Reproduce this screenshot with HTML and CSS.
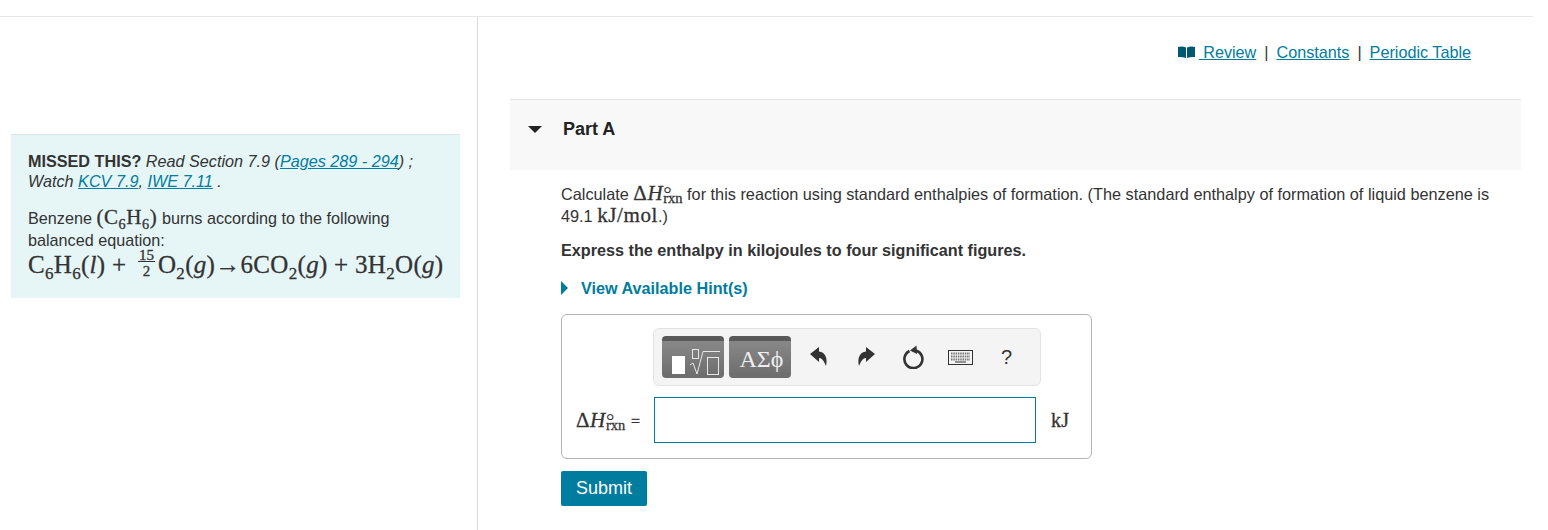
FILE: index.html
```html
<!DOCTYPE html>
<html lang="en">
<head>
  <meta charset="UTF-8">
  <title>Part A</title>
  <link rel="stylesheet" href="styles.css">
</head>
<body>
  <div class="page">
    <div class="left-section">
      <div class="intro">
        <p class="missed"><b>MISSED THIS?</b> <i>Read Section 7.9 (<a href="#">Pages 289 - 294</a>) ;<br>Watch <a href="#">KCV 7.9</a>, <a href="#">IWE 7.11</a> .</i></p>
        <p class="benzene">Benzene <span class="math paren">(C<sub>6</sub>H<sub>6</sub>)</span> burns according to the following<br>balanced equation:</p>
        <p class="equation math">C<sub>6</sub>H<sub>6</sub>(<i>l</i>) + <span class="frac"><span class="num">15</span><span class="den">2</span></span>O<sub>2</sub>(<i>g</i>)→6CO<sub>2</sub>(<i>g</i>) + 3H<sub>2</sub>O(<i>g</i>)</p>
      </div>
    </div>

    <div class="right-section">
      <div class="top-links">
        <svg class="book" width="17" height="12" viewBox="0 0 17 12"><path d="M0 1 Q4 0 8 1.500 V12 Q4 10.500 0 11 Z M9 1.500 Q13 0 17 1 V11 Q13 10.500 9 12 Z" fill="#00596f"/></svg>
        <a href="#">&nbsp;Review</a><span class="sep">|</span><a href="#">Constants</a><span class="sep">|</span><a href="#">Periodic Table</a>
      </div>

      <div class="part-head">
        <span class="arrow-down"></span>
        <h2>Part A</h2>
      </div>

      <div class="part-body">
        <p class="question">Calculate <span class="math big">Δ<i>H</i><span class="deg">°</span><span class="rxn">rxn</span></span> for this reaction using standard enthalpies of formation. (The standard enthalpy of formation of liquid benzene is<br>49.1 <span class="math big">kJ/mol</span>.)</p>
        <p class="express">Express the enthalpy in kilojoules to four significant figures.</p>
        <div class="hint"><span class="arrow-right"></span><a href="#">View Available Hint(s)</a></div>

        <div class="answer-box">
          <div class="toolbar">
            <div class="tool-btn templates">
              <span class="white-box"></span>
              <svg width="30" height="30" viewBox="0 0 30 30" fill="none" stroke="#e8e8e8" stroke-width="1"><rect x="2.500" y="2.500" width="6" height="9"/><path d="M0 18 L3 16 L7 27 L13 4.500 H30"/><rect x="17.500" y="10.500" width="11" height="17"/></svg>
            </div>
            <div class="tool-btn greek">ΑΣϕ</div>
            <svg class="icon undo" width="20" height="20" viewBox="0 0 20 20"><path d="M2 7 L11 0 V4.500 C17 5 20 11 18 19 C16 14 14 11 11 11 V15 Z" fill="#333"/></svg>
            <svg class="icon redo" width="20" height="20" viewBox="0 0 20 20"><path d="M18 7 L9 0 V4.500 C3 5 0 11 2 19 C4 14 6 11 9 11 V15 Z" fill="#333"/></svg>
            <svg class="icon reload" width="22" height="24" viewBox="0 0 22 24" fill="none"><path d="M7.500 6 A9 9 0 1 0 14 5.500" stroke="#333" stroke-width="2.600"/><path d="M14.500 0.500 L8 5.500 L15 9 Z" fill="#333"/></svg>
            <svg class="icon keys" width="25" height="15" viewBox="0 0 25 15" fill="none"><rect x="0.500" y="0.500" width="24" height="14" stroke="#333"/><path d="M3 3.500 H22 M3 6.500 H22 M3 9.500 H22" stroke="#777" stroke-width="2" stroke-dasharray="1.500 0.800"/><path d="M7 12 H18" stroke="#333"/></svg>
            <span class="help">?</span>
          </div>
          <div class="answer-row">
            <span class="label math">Δ<i>H</i><span class="deg">°</span><span class="rxn">rxn</span> <span class="equals">=</span></span>
            <input class="answer-input" type="text">
            <span class="unit math">kJ</span>
          </div>
        </div>

        <button class="btn">Submit</button>
      </div>
    </div>
  </div>
</body>
</html>
```

FILE: styles.css
```css
* {
  box-sizing: border-box;
}

html, body {
  margin: 0;
  padding: 0;
  height: 530px;
  overflow: hidden;
  background: #fff;
}

body {
  font-family: "Liberation Sans", Arial, sans-serif;
  font-size: 16.2px;
  color: #333;
}

a {
  color: #007c9e;
  text-decoration: underline;
}

p {
  margin: 0;
}

.math {
  font-family: "Liberation Serif", "Times New Roman", serif;
  letter-spacing: 0.3px;
  -webkit-text-stroke: 0.3px currentColor;
}

.page {
  display: flex;
  width: 1533px;
  height: 514px;
  margin-top: 16px;
  border-top: 1px solid #e6e6e6;
}

.left-section {
  width: 478px;
  padding: 117px 17px 0 11px;
  border-right: 1px solid #d9d9d9;
}

.intro {
  height: 164px;
  padding: 16px 17px 0;
  background: #e6f6f7;
  border-top: 1px solid #d9e5e5;
}

.missed {
  line-height: 20px;
}

.benzene {
  margin-top: 16px;
  line-height: 22px;
}

.benzene .paren {
  font-size: 21px;
  line-height: 20px;
  letter-spacing: 0.6px;
}

sub {
  font-size: 0.68em;
  line-height: 0;
}

.equation {
  margin-top: -2px;
  font-size: 25px;
  line-height: 30px;
  white-space: nowrap;
}

.frac {
  display: inline-flex;
  flex-direction: column;
  align-items: center;
  height: 0;
  margin: 0 3px 0 5px;
  font-size: 15px;
  letter-spacing: 0;
  vertical-align: 13px;
}

.num {
  line-height: 12px;
  border-bottom: 1px solid #333;
  padding: 0 1px;
}

.den {
  line-height: 18px;
}

.right-section {
  flex: 1;
  padding-left: 32px;
  min-width: 0;
}

.top-links {
  display: flex;
  justify-content: flex-end;
  align-items: center;
  height: 18px;
  margin-top: 26px;
  padding-right: 62px;
}

.book {
  margin-right: 4px;
}

.sep {
  margin: 0 8px;
}

.part-head {
  display: flex;
  align-items: center;
  width: 1011px;
  height: 71px;
  margin-top: 38px;
  padding: 0 0 11px 18px;
  background: #f8f8f8;
  border-top: 1px solid #e2e2e2;
}

.arrow-down {
  width: 0;
  height: 0;
  border-left: 7px solid transparent;
  border-right: 7px solid transparent;
  border-top: 7px solid #222;
}

.part-head h2 {
  margin: 0 0 0 21px;
  font-size: 18px;
  color: #222;
}

.part-body {
  padding-left: 51px;
}

.question {
  margin-top: 13px;
  font-size: 16.28px;
  line-height: 21px;
  white-space: nowrap;
}

.big {
  font-size: 21px;
  letter-spacing: 0.6px;
}

/* degree takes no width so rxn sits right under it */
.deg {
  display: inline-block;
  width: 0;
  font-size: 21px;
  line-height: 0;
  vertical-align: -1px;
  -webkit-text-stroke: 0;
}

.rxn {
  font-size: 14.500px;
  line-height: 0;
  letter-spacing: 0;
  vertical-align: -3px;
}

.express {
  margin-top: 13px;
  font-weight: bold;
  line-height: 20px;
}

.hint {
  display: flex;
  align-items: center;
  margin-top: 18px;
  height: 20px;
  font-weight: bold;
}

.hint a {
  text-decoration: none;
}

.arrow-right {
  width: 0;
  height: 0;
  margin-right: 13px;
  border-top: 7px solid transparent;
  border-bottom: 7px solid transparent;
  border-left: 7px solid #007c9e;
}

.answer-box {
  width: 531px;
  height: 145px;
  margin-top: 16px;
  padding: 13px 20px 0 14px;
  border: 1px solid #b3b3b3;
  border-radius: 6px;
}

.toolbar {
  display: flex;
  align-items: center;
  width: 388px;
  height: 58px;
  margin-left: 77px;
  padding-left: 8px;
  background: #f4f4f4;
  border: 1px solid #e3e3e3;
  border-radius: 6px;
}

.tool-btn {
  display: flex;
  align-items: flex-end;
  width: 62px;
  height: 42px;
  background: linear-gradient(#888, #6c6c6c);
  border-top: 5px solid #595959;
  border-radius: 4px;
  color: #eee;
}

.templates {
  margin-right: 5px;
  padding: 0 0 1px 10px;
}

.white-box {
  flex: none;
  width: 13px;
  height: 18px;
  margin: 0 5px 3px 0;
  background: #fff;
}

.greek {
  align-items: center;
  justify-content: center;
  padding-left: 3px;
  font-family: "Liberation Serif", serif;
  font-size: 24px;
}

.undo {
  margin-left: 17px;
}

.redo {
  margin-left: 29px;
}

.reload {
  margin-left: 25px;
}

.keys {
  margin-left: 24px;
}

.help {
  margin-left: 28px;
  font-size: 20px;
}

.answer-row {
  display: flex;
  align-items: center;
  margin-top: 11px;
}

.label {
  width: 78px;
  font-size: 21px;
  letter-spacing: 0.6px;
  white-space: nowrap;
}

.equals {
  font-size: 16px;
}

.answer-input {
  width: 382px;
  height: 46px;
  border: 1px solid #007c9e;
  background: #fff;
}

.unit {
  margin-left: 15px;
  font-size: 20px;
}

.btn {
  display: block;
  width: 86px;
  height: 35px;
  margin-top: 12px;
  border: none;
  border-radius: 2px;
  background: #007c9e;
  color: #fff;
  font-family: "Liberation Sans", Arial, sans-serif;
  font-size: 18px;
}
```
